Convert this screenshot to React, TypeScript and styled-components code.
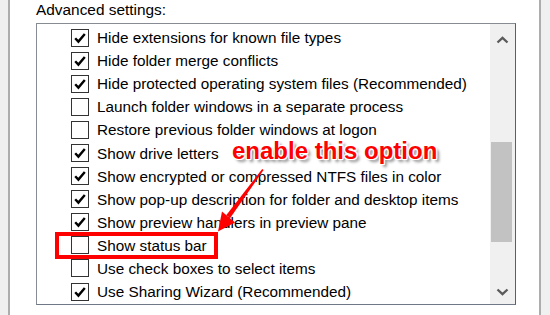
import React from 'react';
import styled, { createGlobalStyle } from 'styled-components';

const GlobalStyle = createGlobalStyle`
  html, body {
    margin: 0;
    padding: 0;
    background: #ffffff;
    overflow: hidden;
  }
  body {
    font-family: "Liberation Sans", Arial, sans-serif;
    color: #000;
  }
`;

const Page = styled.div`
  position: relative;
  display: flex;
  width: 550px;
  height: 315px;
  background: #ffffff;
`;

const SideStrip = styled.div<{ $side: 'left' | 'right' }>`
  flex: none;
  width: ${({ $side }) => ($side === 'left' ? '8px' : '9px')};
  background: #f0f0f0;
  ${({ $side }) =>
    $side === 'left' ? 'border-right: 2px solid #adadad;' : 'border-left: 2px solid #adadad;'}
`;

const Main = styled.div`
  flex: 1;
  padding: 1px 0 0 26px;
  display: flex;
  flex-direction: column;
`;

const Heading = styled.div`
  font-size: 15.4px;
  line-height: 18px;
  margin-bottom: 4px;
`;

const ListBox = styled.div`
  box-sizing: border-box;
  width: 480px;
  height: 282px;
  display: flex;
  border: 1px solid;
  border-color: #868b94 #56606f #6f7886 #868b94;
  background: #ffffff;
`;

const List = styled.div`
  flex: 1;
  padding-top: 2px;
  overflow: hidden;
`;

const Row = styled.div<{ $highlight?: boolean }>`
  position: relative;
  display: flex;
  align-items: center;
  gap: 8px;
  height: 23.1px;
  padding-left: 34px;
  font-size: 15.3px;
  line-height: 23px;
  white-space: nowrap;

  ${({ $highlight }) =>
    $highlight &&
    `
    &::after {
      content: '';
      position: absolute;
      left: 18px;
      top: -2px;
      width: 155px;
      bottom: -2px;
      border: 4px solid #ff0000;
    }
  `}
`;

const Box = styled.span`
  flex: none;
  box-sizing: border-box;
  width: 18px;
  height: 18px;
  border: 1px solid #333333;
  background: #ffffff;
  display: flex;
  align-items: center;
  justify-content: center;
`;

const ScrollBar = styled.div`
  flex: none;
  width: 25px;
  display: flex;
  flex-direction: column;
  background: #f0f0f0;
`;

const ArrowButton = styled.div<{ $h: number }>`
  flex: none;
  height: ${({ $h }) => $h}px;
  display: flex;
  align-items: center;
  justify-content: center;
`;

const Track = styled.div`
  flex: 1;
  display: flex;
  flex-direction: column;
`;

const Thumb = styled.div`
  margin: 86px 3px 0 1px;
  height: 100px;
  background: #c2c2c2;
`;

const Callout = styled.div`
  position: absolute;
  left: 232px;
  top: 139px;
  font-family: "Liberation Sans", Arial, sans-serif;
  font-weight: 700;
  font-size: 24px;
  line-height: 24px;
  color: #ff0000;
  white-space: nowrap;
  text-shadow: -1px -1px 0 #fff, 1px -1px 0 #fff, -1px 1px 0 #fff, 1px 1px 0 #fff,
    0 -1px 0 #fff, 0 1px 0 #fff, -1px 0 0 #fff, 1px 0 0 #fff,
    3px 3px 3px rgba(0, 0, 0, 0.45);
`;

const Overlay = styled.svg`
  position: absolute;
  left: 0;
  top: 0;
  pointer-events: none;
`;

const Check = () => (
  <svg width="14" height="14" viewBox="0 0 14 14">
    <path d="M2.2 7.2 L5.4 10.6 L11.8 3" fill="none" stroke="#000" strokeWidth="2.4" />
  </svg>
);

const Chevron = ({ down }: { down?: boolean }) => (
  <svg width="13" height="8" viewBox="0 0 13 8">
    <path
      d={down ? 'M1.5 1.5 L6.5 6.2 L11.5 1.5' : 'M1.5 6.5 L6.5 1.8 L11.5 6.5'}
      fill="none"
      stroke="#5a5a5a"
      strokeWidth="2.3"
    />
  </svg>
);

const options = [
  { label: 'Hide extensions for known file types', checked: true },
  { label: 'Hide folder merge conflicts', checked: true },
  { label: 'Hide protected operating system files (Recommended)', checked: true },
  { label: 'Launch folder windows in a separate process', checked: false },
  { label: 'Restore previous folder windows at logon', checked: false },
  { label: 'Show drive letters', checked: true },
  { label: 'Show encrypted or compressed NTFS files in color', checked: true },
  { label: 'Show pop-up description for folder and desktop items', checked: true },
  { label: 'Show preview handlers in preview pane', checked: true },
  { label: 'Show status bar', checked: false, highlight: true },
  { label: 'Use check boxes to select items', checked: false },
  { label: 'Use Sharing Wizard (Recommended)', checked: true },
];

export default function App() {
  return (
    <>
      <GlobalStyle />
      <Page>
        <SideStrip $side="left" />
        <Main>
          <Heading>Advanced settings:</Heading>
          <ListBox>
            <List>
              {options.map((o) => (
                <Row key={o.label} $highlight={o.highlight}>
                  <Box>{o.checked && <Check />}</Box>
                  <span>{o.label}</span>
                </Row>
              ))}
            </List>
            <ScrollBar>
              <ArrowButton $h={32}>
                <Chevron />
              </ArrowButton>
              <Track>
                <Thumb />
              </Track>
              <ArrowButton $h={24}>
                <Chevron down />
              </ArrowButton>
            </ScrollBar>
          </ListBox>
        </Main>
        <SideStrip $side="right" />

        <Callout>enable this option</Callout>
        <Overlay width="550" height="315" viewBox="0 0 550 315">
          <polygon points="262.2,169 263.6,170 230.2,218 226.2,215.2" fill="#ff0000" />
          <polygon points="218,231.5 235,222.5 222,211.5" fill="#ff0000" />
        </Overlay>
      </Page>
    </>
  );
}
